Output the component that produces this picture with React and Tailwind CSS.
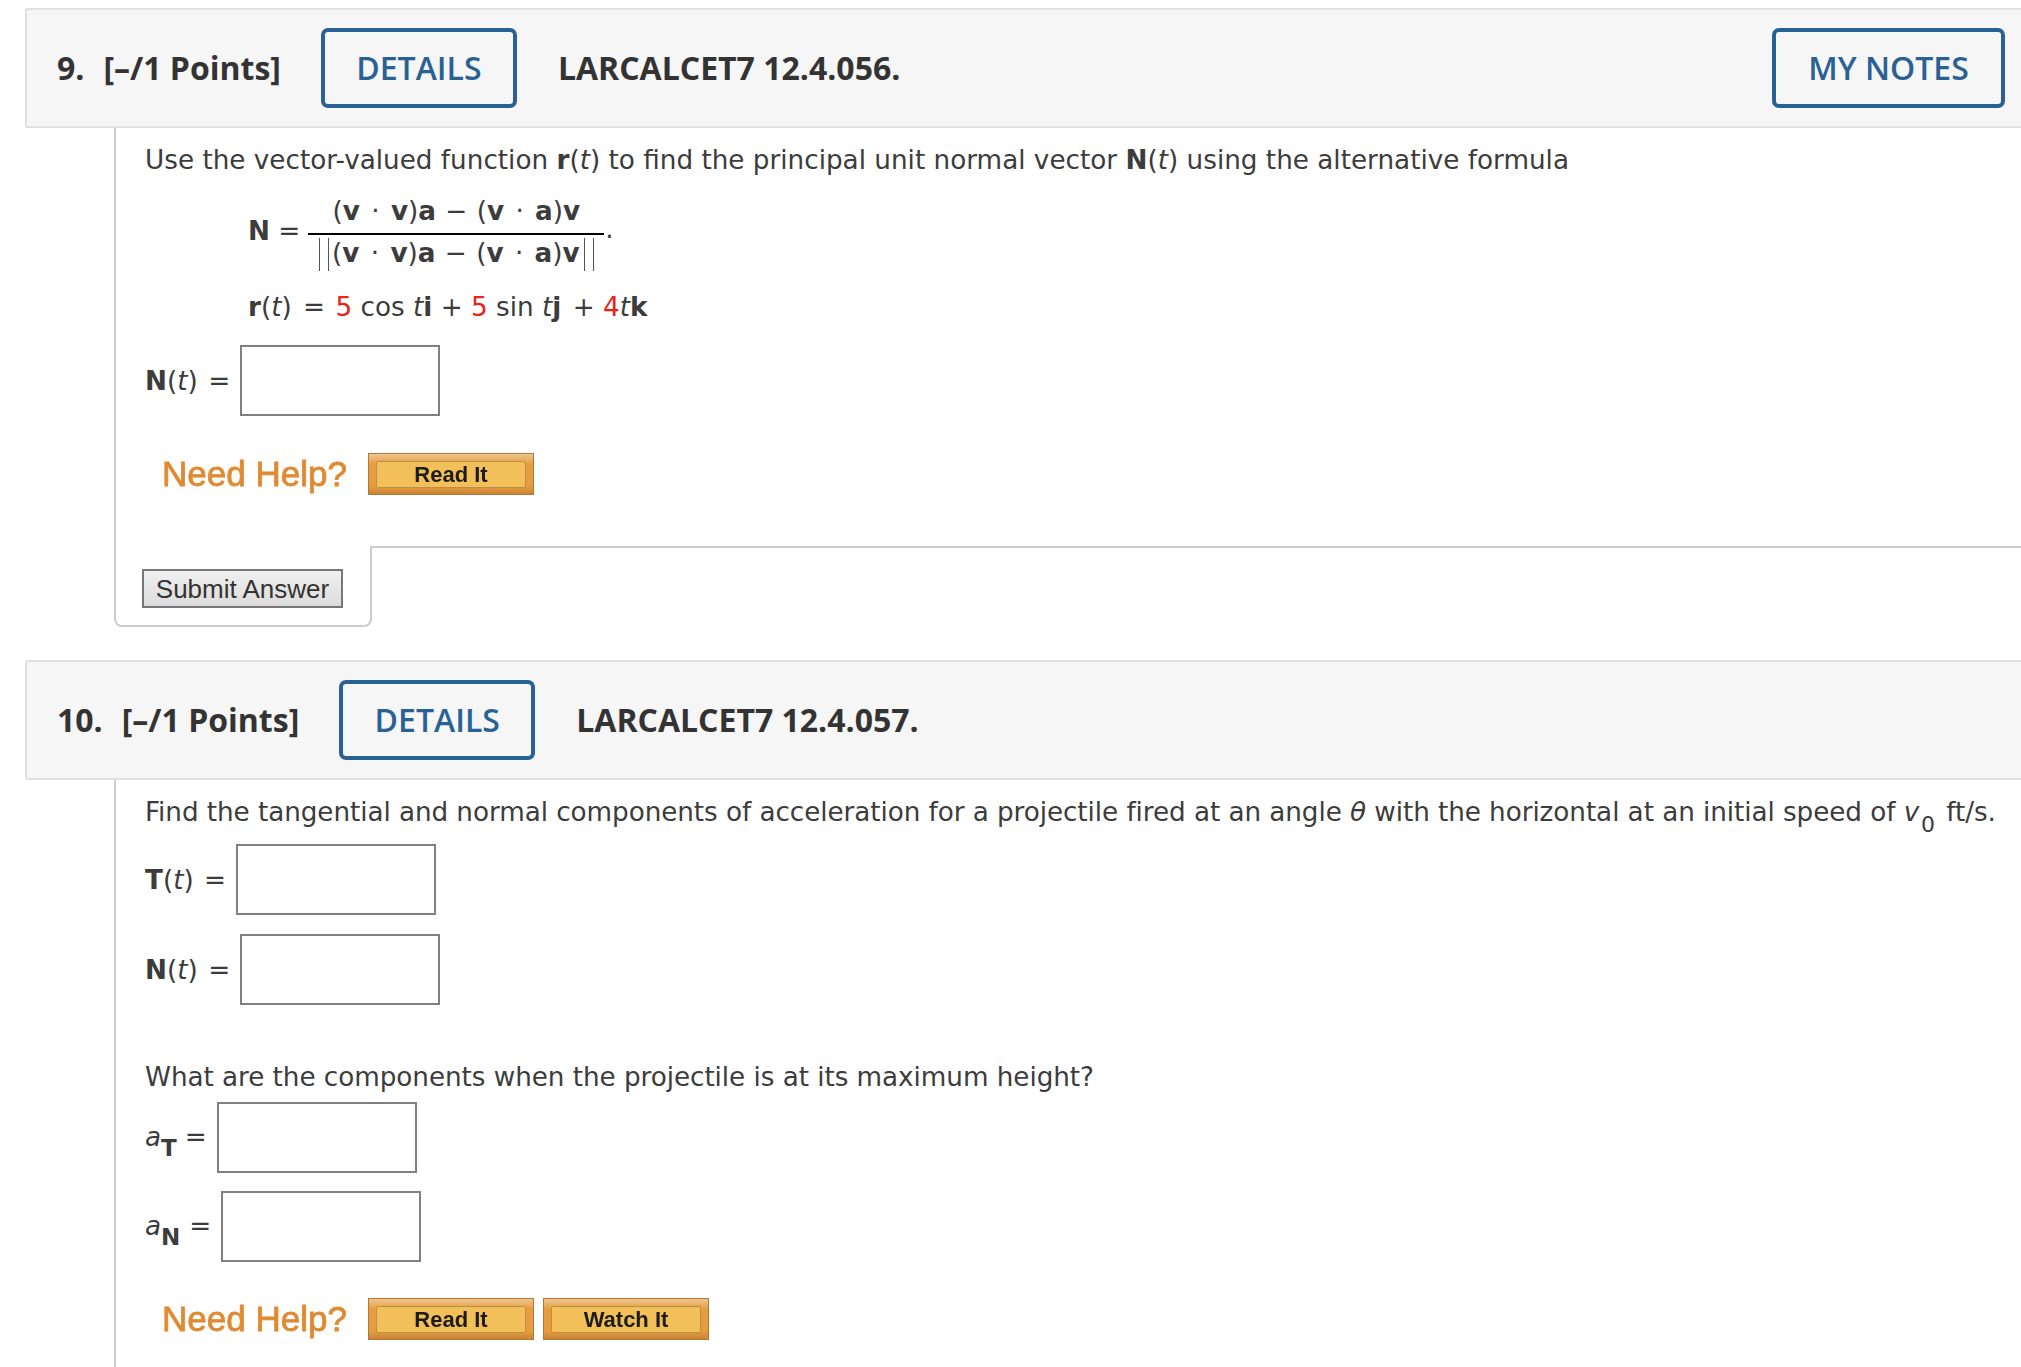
const S = "font-['DejaVu_Sans','Verdana',sans-serif]";

function Header({ num, title, code, notes }) {
  return (
    <div className="flex items-center h-[120px] ml-[25px] pl-[30px] pr-[16px] bg-[#f6f6f6] border-2 border-r-0 border-[#e0e0e0] rounded-l-[3px] font-['Open_Sans',sans-serif] font-bold text-[32px] text-[#333333]">
      <span>{num}</span>
      <span className="ml-[19px] whitespace-nowrap">{title}</span>
      <Outline className="ml-[40px] w-[196px]">DETAILS</Outline>
      <span className="ml-[41px] whitespace-nowrap">{code}</span>
      {notes && <Outline className="ml-auto w-[233px]">MY NOTES</Outline>}
    </div>
  );
}

function Outline({ className, children }) {
  return (
    <button className={"h-[80px] flex items-center justify-center border-[4px] border-[#2a6195] rounded-[7px] text-[#2a6195] text-[32px] font-semibold whitespace-nowrap " + className}>
      {children}
    </button>
  );
}

const B = ({ children }) => <b className="font-bold">{children}</b>;
const I = ({ children }) => <i className="italic">{children}</i>;
const Red = ({ children }) => <span className="text-[#e8241a]">{children}</span>;

function Answer({ label, className }) {
  return (
    <div className={"flex items-center h-[71px] " + className}>
      <span className="whitespace-nowrap">{label}</span>
      <div className="ml-[10px] w-[200px] h-[71px] border-2 border-[#808080] bg-white" />
    </div>
  );
}

const FnLabel = ({ v }) => (
  <span className="inline-block mt-[3px]"><B>{v}</B>(<I>t</I>) <span className="ml-[2px]">=</span></span>
);

const SubLabel = ({ v, gap }) => (
  <span className="flex items-start">
    <I>a</I>
    <b className="font-bold text-[23px] leading-none mt-[19px] -mb-[10px]">{v}</b>
    <span className={gap}>=</span>
  </span>
);

function HelpBtn({ children }) {
  return (
    <button className="w-[166px] h-[42px] p-[7px] pb-[6px] bg-[linear-gradient(#eec68f_0,#e89c40_25%,#e89c40_80%,#c98433_100%)] border border-[#ae7a3c]">
      <span className="flex items-center justify-center w-full h-full bg-[#f2bf58] border border-[#b98f4c] rounded-[2px] font-['Liberation_Sans',sans-serif] font-bold text-[22px] text-[#1c1c1c] blur-[0.4px]">
        {children}
      </span>
    </button>
  );
}

function Help({ className, children }) {
  return (
    <div className={"flex items-center h-[42px] " + className}>
      <span className="ml-[17px] w-[206px] font-['Liberation_Sans',sans-serif] text-[35px] text-[#e08a32] [-webkit-text-stroke:0.8px_#e08a32] blur-[0.4px] whitespace-nowrap">Need Help?</span>
      <div className="flex gap-[9px]">{children}</div>
    </div>
  );
}

const Dot = () => <span className="mx-[3px]"> · </span>;

const Expr = () => (
  <span>
    (<B>v</B><Dot /><B>v</B>)<B>a</B> <span className="mx-[1px]">−</span> (<B>v</B><Dot /><B>a</B>)<B>v</B>
  </span>
);

function Formula() {
  return (
    <div className="ml-[103px] mt-[11px] flex items-center h-[85px] whitespace-nowrap">
      <span className="mt-[3px]"><B>N</B> =</span>
      <div className="ml-[8px] w-[296px] flex flex-col items-center">
        <div className="h-[45px] pt-[2px] flex items-center"><Expr /></div>
        <div className="w-full h-[2px] bg-black" />
        <div className="h-[38px] flex items-center">
          <span className="inline-block w-[10px] h-[33px] mr-[3px] border-x border-[#555]" />
          <Expr />
          <span className="inline-block w-[10px] h-[33px] ml-[4px] border-x border-[#555]" />
        </div>
      </div>
      <span className="ml-[1px] -mt-[1px]">.</span>
    </div>
  );
}

export default function App() {
  return (
    <div className={S + " h-[1367px] w-[2021px] overflow-hidden bg-white text-[26.25px] text-[#3c3c3c] flex flex-col"}>
      <div className="mt-[8px]">
        <Header num="9." title="[–/1 Points]" code="LARCALCET7 12.4.056." notes />
        <div className="ml-[114px]">
          <div className="border-l-2 border-[#cccccc] pl-[29px] pt-[17px] h-[418px]">
            <div className="h-[32px] flex items-center whitespace-nowrap">
              <span>Use the vector-valued function <B>r</B>(<I>t</I>) to find the principal unit normal vector <B>N</B>(<I>t</I>) using the alternative formula</span>
            </div>
            <Formula />
            <div className="ml-[103px] mt-[13px] h-[44px] flex items-center whitespace-nowrap">
              <span><B>r</B>(<I>t</I>) <span className="ml-[3px]">=</span> <span className="ml-[2px]"><Red>5</Red></span> cos <I>t</I><B>i</B> + <Red>5</Red> sin <I>t</I><B>j</B> <span className="ml-[3px]">+</span> <Red>4</Red><I>t</I><B>k</B></span>
            </div>
            <Answer className="mt-[15px]" label={<FnLabel v="N" />} />
            <Help className="mt-[37px]"><HelpBtn>Read It</HelpBtn></Help>
          </div>
          <div className="flex h-[81px]">
            <div className="w-[258px] border-2 border-t-0 border-[#cccccc] rounded-b-[8px] pt-[23px] pl-[26px]">
              <button className="w-[201px] h-[39px] border-2 border-[#777777] bg-[linear-gradient(#f0f0f0,#dcdcdc)] font-['Liberation_Sans',sans-serif] text-[26px] leading-none text-[#333] whitespace-nowrap">Submit Answer</button>
            </div>
            <div className="flex-1 border-t-2 border-[#cccccc]" />
          </div>
        </div>
      </div>

      <div className="mt-[33px] flex-1 flex flex-col">
        <Header num="10." title="[–/1 Points]" code="LARCALCET7 12.4.057." />
        <div className="flex-1 ml-[114px] border-l-2 border-[#cccccc] pl-[29px] pt-[17px]">
          <div className="h-[32px] flex items-center whitespace-nowrap tracking-[-0.07px]">
            <span>Find the tangential and normal components of acceleration for a projectile fired at an angle <I>θ</I> with the horizontal at an initial speed of <I>v</I><sub className="ml-[2px] text-[22px] align-[-5px] leading-none">0</sub> <span className="ml-[3px]">ft/s.</span></span>
          </div>
          <Answer className="mt-[15px]" label={<FnLabel v="T" />} />
          <Answer className="mt-[19px]" label={<FnLabel v="N" />} />
          <div className="mt-[57px] h-[32px] flex items-center whitespace-nowrap tracking-[-0.055px]">What are the components when the projectile is at its maximum height?</div>
          <Answer className="mt-[8px]" label={<SubLabel v="T" gap="ml-[8px]" />} />
          <Answer className="mt-[18px]" label={<SubLabel v="N" gap="ml-[9px]" />} />
          <Help className="mt-[36px]"><HelpBtn>Read It</HelpBtn><HelpBtn>Watch It</HelpBtn></Help>
        </div>
      </div>
    </div>
  );
}
